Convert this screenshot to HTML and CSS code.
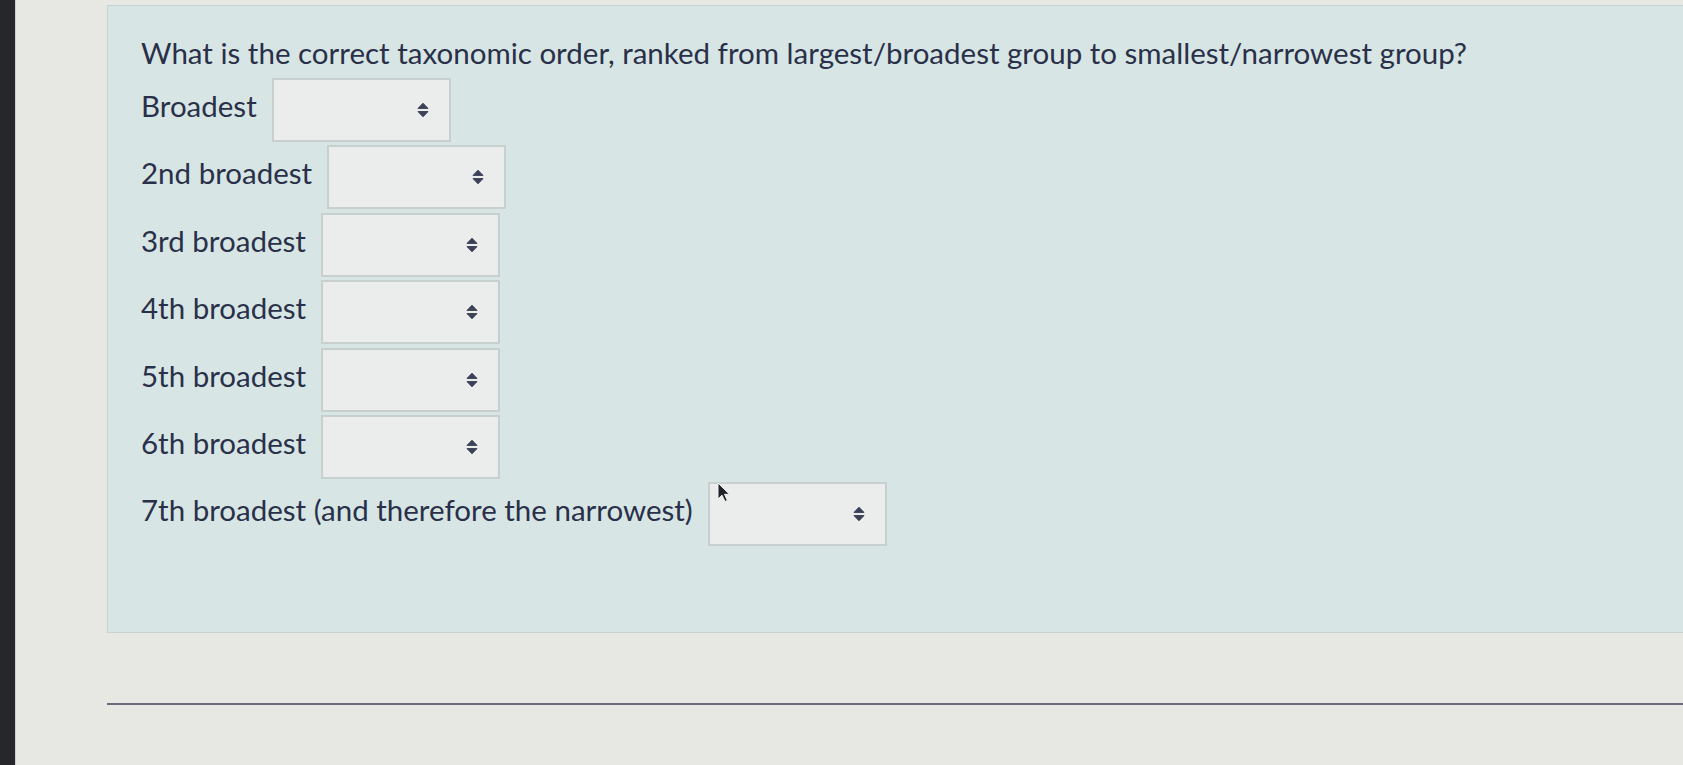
FILE: index.html
```html
<!DOCTYPE html>
<html lang="en">
<head>
<meta charset="utf-8">
<title>Taxonomic order</title>
<link rel="stylesheet" href="styles.css">
</head>
<body>
<div class="screen">
  <div class="bezel"></div>
  <main class="page">
    <section class="question-panel">
      <p class="prompt">What is the correct taxonomic order, ranked from largest/broadest group to smallest/narrowest group?</p>

      <div class="rank-row">
        <label class="rank-label" for="rank1">Broadest</label>
        <span class="select-wrap">
          <select class="rank-select" id="rank1">
            <option></option><option>Kingdom</option><option>Phylum</option><option>Class</option><option>Order</option><option>Family</option><option>Genus</option><option>Species</option>
          </select>
          <svg class="select-arrows" viewBox="0 0 12 16" aria-hidden="true"><path d="M6 1.2 L11 6.4 H1 Z M1 9.6 H11 L6 14.8 Z"/></svg>
        </span>
      </div>

      <div class="rank-row">
        <label class="rank-label" for="rank2">2nd broadest</label>
        <span class="select-wrap">
          <select class="rank-select" id="rank2">
            <option></option><option>Kingdom</option><option>Phylum</option><option>Class</option><option>Order</option><option>Family</option><option>Genus</option><option>Species</option>
          </select>
          <svg class="select-arrows" viewBox="0 0 12 16" aria-hidden="true"><path d="M6 1.2 L11 6.4 H1 Z M1 9.6 H11 L6 14.8 Z"/></svg>
        </span>
      </div>

      <div class="rank-row">
        <label class="rank-label" for="rank3">3rd broadest</label>
        <span class="select-wrap">
          <select class="rank-select" id="rank3">
            <option></option><option>Kingdom</option><option>Phylum</option><option>Class</option><option>Order</option><option>Family</option><option>Genus</option><option>Species</option>
          </select>
          <svg class="select-arrows" viewBox="0 0 12 16" aria-hidden="true"><path d="M6 1.2 L11 6.4 H1 Z M1 9.6 H11 L6 14.8 Z"/></svg>
        </span>
      </div>

      <div class="rank-row">
        <label class="rank-label" for="rank4">4th broadest</label>
        <span class="select-wrap">
          <select class="rank-select" id="rank4">
            <option></option><option>Kingdom</option><option>Phylum</option><option>Class</option><option>Order</option><option>Family</option><option>Genus</option><option>Species</option>
          </select>
          <svg class="select-arrows" viewBox="0 0 12 16" aria-hidden="true"><path d="M6 1.2 L11 6.4 H1 Z M1 9.6 H11 L6 14.8 Z"/></svg>
        </span>
      </div>

      <div class="rank-row">
        <label class="rank-label" for="rank5">5th broadest</label>
        <span class="select-wrap">
          <select class="rank-select" id="rank5">
            <option></option><option>Kingdom</option><option>Phylum</option><option>Class</option><option>Order</option><option>Family</option><option>Genus</option><option>Species</option>
          </select>
          <svg class="select-arrows" viewBox="0 0 12 16" aria-hidden="true"><path d="M6 1.2 L11 6.4 H1 Z M1 9.6 H11 L6 14.8 Z"/></svg>
        </span>
      </div>

      <div class="rank-row">
        <label class="rank-label" for="rank6">6th broadest</label>
        <span class="select-wrap">
          <select class="rank-select" id="rank6">
            <option></option><option>Kingdom</option><option>Phylum</option><option>Class</option><option>Order</option><option>Family</option><option>Genus</option><option>Species</option>
          </select>
          <svg class="select-arrows" viewBox="0 0 12 16" aria-hidden="true"><path d="M6 1.2 L11 6.4 H1 Z M1 9.6 H11 L6 14.8 Z"/></svg>
        </span>
      </div>

      <div class="rank-row">
        <label class="rank-label" for="rank7">7th broadest (and therefore the narrowest)</label>
        <span class="select-wrap">
          <select class="rank-select" id="rank7">
            <option></option><option>Kingdom</option><option>Phylum</option><option>Class</option><option>Order</option><option>Family</option><option>Genus</option><option>Species</option>
          </select>
          <svg class="select-arrows" viewBox="0 0 12 16" aria-hidden="true"><path d="M6 1.2 L11 6.4 H1 Z M1 9.6 H11 L6 14.8 Z"/></svg>
          <svg class="pointer" viewBox="0 0 13 21" aria-hidden="true"><path d="M1 1 V17 L5 13.2 L8 19.5 L10.4 18.4 L7.5 12.3 H12.5 Z"/></svg>
        </span>
      </div>
    </section>
    <hr class="divider">
  </main>
</div>
</body>
</html>
```

FILE: styles.css
```css
html, body {
  margin: 0;
  padding: 0;
  height: 100%;
  overflow: hidden;
}

body {
  background: #e7e7e4;
  font-family: Lato, "Noto Sans", sans-serif;
  color: #2a3049;
}

.screen {
  display: flex;
  height: 100%;
}

/* dark monitor edge on the left */
.bezel {
  flex: 0 0 15px;
  background: #26272b;
  border-right: 1px solid #d8cccc;
}

.page {
  flex: 1;
  padding: 5px 0 0 91px;
  min-width: 0;
}

.question-panel {
  height: 628px;
  box-sizing: border-box;
  padding: 28px 0 0 33px;
  background: #d7e6e4;
  border: 1px solid #c4d4d2;
  border-right: none;
}

.prompt {
  margin: 0 0 6px;
  font-size: 29.5px;
  line-height: 38px;
}

.rank-row {
  display: flex;
  align-items: center;
  height: 64px;
  margin-bottom: 3.4px;
}

.rank-label {
  font-size: 29.5px;
  line-height: 38px;
  margin: 0 15px 8px 0;
  white-space: nowrap;
}

.select-wrap {
  position: relative;
  display: block;
  width: 179px;
  height: 64px;
}

.rank-select {
  appearance: none;
  -webkit-appearance: none;
  display: block;
  width: 100%;
  height: 100%;
  margin: 0;
  box-sizing: border-box;
  background: #ebedec;
  border: 2px solid #c8cfcf;
  border-radius: 0;
  font: inherit;
  color: inherit;
  outline: none;
}

.select-arrows {
  position: absolute;
  right: 22px;
  top: calc(50% - 8px);
  width: 12px;
  height: 16px;
  fill: #3c4157;
  stroke: #3c4157;
  stroke-width: 1;
  stroke-linejoin: round;
  pointer-events: none;
}

/* mouse pointer resting on the last dropdown */
.pointer {
  position: absolute;
  left: 9px;
  top: 0;
  width: 13px;
  height: 21px;
  fill: #1f2226;
  stroke: #f2f2f2;
  stroke-width: 1;
  stroke-linejoin: round;
  pointer-events: none;
}

.divider {
  margin: 70px 0 0;
  height: 2px;
  border: none;
  background: #6b6a7b;
}
```
